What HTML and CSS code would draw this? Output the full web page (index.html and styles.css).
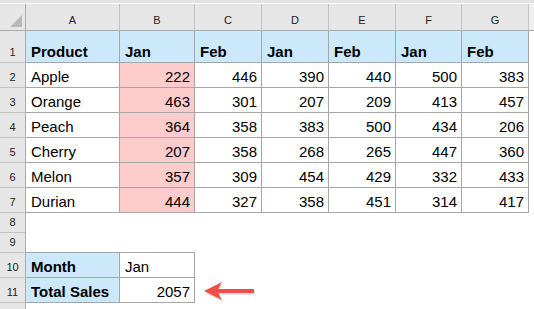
FILE: index.html
```html
<!DOCTYPE html>
<html>
<head>
<meta charset="utf-8">
<link rel="stylesheet" href="styles.css">
</head>
<body>
<div class="topbar"></div>
<div class="sheet">
  <div class="corner"><svg width="12" height="12" viewBox="0 0 12 12"><polygon points="0,12 12,0 12,12" fill="#b9b9b9"/></svg></div>
  <div class="ch">A</div><div class="ch">B</div><div class="ch">C</div><div class="ch">D</div><div class="ch">E</div><div class="ch">F</div><div class="ch">G</div><div class="ch ch-end"></div>

  <div class="rh">1</div>
  <div class="c b hd">Product</div><div class="c b hd">Jan</div><div class="c b hd">Feb</div><div class="c b hd">Jan</div><div class="c b hd">Feb</div><div class="c b hd">Jan</div><div class="c b hd">Feb</div><div class="c"></div>

  <div class="rh">2</div>
  <div class="c b">Apple</div><div class="c b n pk">222</div><div class="c b n">446</div><div class="c b n">390</div><div class="c b n">440</div><div class="c b n">500</div><div class="c b n">383</div><div class="c"></div>

  <div class="rh">3</div>
  <div class="c b">Orange</div><div class="c b n pk">463</div><div class="c b n">301</div><div class="c b n">207</div><div class="c b n">209</div><div class="c b n">413</div><div class="c b n">457</div><div class="c"></div>

  <div class="rh">4</div>
  <div class="c b">Peach</div><div class="c b n pk">364</div><div class="c b n">358</div><div class="c b n">383</div><div class="c b n">500</div><div class="c b n">434</div><div class="c b n">206</div><div class="c"></div>

  <div class="rh">5</div>
  <div class="c b">Cherry</div><div class="c b n pk">207</div><div class="c b n">358</div><div class="c b n">268</div><div class="c b n">265</div><div class="c b n">447</div><div class="c b n">360</div><div class="c"></div>

  <div class="rh">6</div>
  <div class="c b">Melon</div><div class="c b n pk">357</div><div class="c b n">309</div><div class="c b n">454</div><div class="c b n">429</div><div class="c b n">332</div><div class="c b n">433</div><div class="c"></div>

  <div class="rh">7</div>
  <div class="c b">Durian</div><div class="c b n pk">444</div><div class="c b n">327</div><div class="c b n">358</div><div class="c b n">451</div><div class="c b n">314</div><div class="c b n">417</div><div class="c"></div>

  <div class="rh">8</div>
  <div class="c"></div><div class="c"></div><div class="c"></div><div class="c"></div><div class="c"></div><div class="c"></div><div class="c"></div><div class="c"></div>

  <div class="rh">9</div>
  <div class="c bb"></div><div class="c bb"></div><div class="c"></div><div class="c"></div><div class="c"></div><div class="c"></div><div class="c"></div><div class="c"></div>

  <div class="rh">10</div>
  <div class="c b hd">Month</div><div class="c b">Jan</div><div class="c"></div><div class="c"></div><div class="c"></div><div class="c"></div><div class="c"></div><div class="c"></div>

  <div class="rh">11</div>
  <div class="c b hd">Total Sales</div><div class="c b n">2057</div><div class="c"></div><div class="c"></div><div class="c"></div><div class="c"></div><div class="c"></div><div class="c"></div>

  <div class="rh"></div>
  <div class="c"></div><div class="c"></div><div class="c"></div><div class="c"></div><div class="c"></div><div class="c"></div><div class="c"></div><div class="c"></div>

  <svg class="arrow" width="60" height="26" viewBox="0 0 60 26">
    <path d="M3 12 L21 3 Q18 8 17.5 10 L53 10 L53 14 L17.5 14 Q18 16 21 21 Z" fill="#9a9a9a" opacity="0.3" transform="translate(1,2)"/>
    <path d="M3 12 L21 3 Q18 8 17.5 10 L53 10 L53 14 L17.5 14 Q18 16 21 21 Z" fill="#ef4f47"/>
  </svg>
</div>
</body>
</html>
```

FILE: styles.css
```css
* { box-sizing: border-box; }
html, body { margin: 0; padding: 0; background: #ffffff; }
body { width: 534px; height: 309px; overflow: hidden; font-family: "Liberation Sans", Arial, sans-serif; }

.topbar {
  height: 4px;
  background: #e2e2e2;
  border-bottom: 1px solid #ffffff;
}

.sheet {
  position: relative;
  display: grid;
  grid-template-columns: 26px 94px 75px 67px 67px 67px 66px 67px 5px;
  grid-template-rows: 27px 32px repeat(6, 25px) 20px 20px 25px 25px 7px;
}

.corner {
  background: #e6e6e6;
  border-right: 1px solid #ababab;
  border-bottom: 1px solid #ababab;
  display: flex;
  justify-content: flex-end;
  align-items: flex-end;
  padding: 0 3px 3px 0;
}

.ch {
  background: #e6e6e6;
  border-right: 1px solid #c3c3c3;
  border-bottom: 1px solid #ababab;
  font-size: 11px;
  color: #222222;
  display: flex;
  justify-content: center;
  align-items: flex-end;
  padding-bottom: 4px;
}
.ch-end { background: #efefef; border-right: none; }

.rh {
  background: #e6e6e6;
  border-right: 1px solid #ababab;
  border-bottom: 1px solid #c3c3c3;
  font-size: 11px;
  color: #222222;
  display: flex;
  justify-content: center;
  align-items: flex-end;
  padding-bottom: 4px;
}

.c {
  font-size: 15px;
  color: #000000;
  display: flex;
  align-items: flex-end;
  padding: 0 4px 2px 5px;
  white-space: nowrap;
}
.b {
  border-right: 1px solid #a6a6a6;
  border-bottom: 1px solid #a6a6a6;
}
.bb { border-bottom: 1px solid #a6a6a6; }
.n { justify-content: flex-end; }
.hd { background: #cce9fb; font-weight: bold; }
.pk { background: #ffcccc; }

.arrow {
  position: absolute;
  left: 201px;
  top: 275px;
}
```
